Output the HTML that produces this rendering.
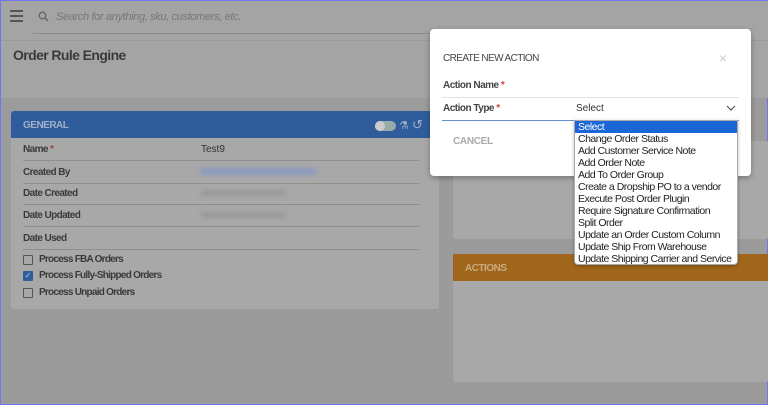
<!DOCTYPE html>
<html><head><style>
*{box-sizing:border-box;margin:0;padding:0}
body{width:768px;height:405px;overflow:hidden;font-family:"Liberation Sans",sans-serif;background:#9b9b9b;position:relative;border:1px solid #6e78f0}
.a{position:absolute}
.lbl{font-size:10px;color:#3a3a3a;font-weight:bold;letter-spacing:-0.6px}
.dv{height:1px;background:#8f8f8f}
.cb{width:10px;height:10px;border:1px solid #555;border-radius:1px}
.ck{font-size:10px;color:#3a3a3a;font-weight:bold;letter-spacing:-0.75px}
.dd div{font-size:10.5px;color:#222;height:12px;line-height:12px;padding-left:3px;white-space:nowrap;letter-spacing:-0.5px}
</style></head><body>
<div class="a" style="left:0;top:0;width:768px;height:97px;background:#a4a4a4"></div>
<div class="a" style="left:9px;top:9px;width:13px;height:2px;background:#555;box-shadow:0 5px 0 #555,0 10px 0 #555"></div>
<svg class="a" style="left:37px;top:10px" width="11" height="11" viewBox="0 0 11 11"><circle cx="4.5" cy="4.5" r="3.3" fill="none" stroke="#666" stroke-width="1.3"/><path d="M7 7l3 3" stroke="#666" stroke-width="1.4"/></svg>
<div class="a" style="left:55px;top:10px;font-size:11px;font-style:italic;color:#777;letter-spacing:-0.35px">Search for anything, sku, customers, etc.</div>
<div class="a" style="left:32px;top:32px;width:400px;height:1px;background:#8c8c8c"></div>
<div class="a" style="left:0;top:39px;width:768px;height:1px;background:#999"></div>
<div class="a" style="left:12px;top:46px;font-size:14px;font-weight:bold;color:#3a3a3a;letter-spacing:-0.6px">Order Rule Engine</div>

<div class="a" style="left:10px;top:110px;width:428px;height:198px;background:#a8a8a8;border-radius:3px"></div>
<div class="a" style="left:10px;top:110px;width:428px;height:27px;background:#2f5c9a;border-radius:3px 3px 0 0"></div>
<div class="a" style="left:22px;top:119px;font-size:10px;color:#9fb0c8;font-weight:bold;letter-spacing:-0.5px">GENERAL</div>
<div class="a" style="left:374px;top:120px;width:21px;height:10px;border-radius:5px;background:#9aa"></div>
<div class="a" style="left:374px;top:120px;width:10px;height:10px;border-radius:5px;background:#ccc"></div>
<div class="a" style="left:398px;top:118px;font-size:11px;color:#9fb0c8">⚗</div>
<div class="a" style="left:411px;top:116px;font-size:13px;color:#9fb0c8">↺</div>
<div class="a lbl" style="left:22px;top:143px">Name <span style="color:#a04040">*</span></div>
<div class="a" style="left:200px;top:143px;font-size:10px;color:#333">Test9</div>
<div class="a dv" style="left:22px;top:159px;width:396px"></div>
<div class="a lbl" style="left:22px;top:166px">Created By</div>
<div class="a" style="left:200px;top:167px;width:115px;height:7px;background:#8a9ac0;filter:blur(2px)"></div>
<div class="a dv" style="left:22px;top:182px;width:396px"></div>
<div class="a lbl" style="left:22px;top:187px">Date Created</div>
<div class="a" style="left:200px;top:189px;width:85px;height:6px;background:#999;filter:blur(2px)"></div>
<div class="a dv" style="left:22px;top:203px;width:396px"></div>
<div class="a lbl" style="left:22px;top:209px">Date Updated</div>
<div class="a" style="left:200px;top:211px;width:85px;height:6px;background:#999;filter:blur(2px)"></div>
<div class="a dv" style="left:22px;top:225px;width:396px"></div>
<div class="a lbl" style="left:22px;top:232px">Date Used</div>
<div class="a dv" style="left:22px;top:248px;width:396px"></div>
<div class="a cb" style="left:22px;top:254px"></div><div class="a ck" style="left:38px;top:253px">Process FBA Orders</div>
<div class="a cb" style="left:22px;top:270px;background:#2f5c9a;border-color:#2f5c9a;color:#ccd;font-size:8px;line-height:8px;text-align:center">✓</div><div class="a ck" style="left:38px;top:269px">Process Fully-Shipped Orders</div>
<div class="a cb" style="left:22px;top:287px"></div><div class="a ck" style="left:38px;top:286px">Process Unpaid Orders</div>

<div class="a" style="left:452px;top:140px;width:316px;height:98px;background:#a8a8a8;border-radius:3px"></div>
<div class="a" style="left:452px;top:253px;width:316px;height:128px;background:#a8a8a8;border-radius:3px"></div>
<div class="a" style="left:452px;top:253px;width:316px;height:27px;background:#a0661c"></div>
<div class="a" style="left:464px;top:262px;font-size:10px;color:#c9ab80;font-weight:bold;letter-spacing:-0.5px">ACTIONS</div>

<div class="a" style="left:429px;top:28px;width:321px;height:147px;background:#fff;border-radius:4px;box-shadow:0 2px 6px rgba(0,0,0,.3)"></div>
<div class="a" style="left:442px;top:52px;font-size:10px;color:#444;letter-spacing:-0.6px">CREATE NEW ACTION</div>
<div class="a" style="left:718px;top:49px;font-size:14px;color:#ccc">×</div>
<div class="a" style="left:442px;top:79px;font-size:10px;color:#444;font-weight:bold;letter-spacing:-0.5px">Action Name <span style="color:#c44">*</span></div>
<div class="a" style="left:441px;top:96px;width:297px;height:1px;background:#e2e2e2"></div>
<div class="a" style="left:442px;top:102px;font-size:10px;color:#444;font-weight:bold;letter-spacing:-0.5px">Action Type <span style="color:#c44">*</span></div>
<div class="a" style="left:575px;top:102px;font-size:10px;color:#333">Select</div>
<svg class="a" style="left:725px;top:104px" width="10" height="6" viewBox="0 0 10 6"><path d="M1 1l4 4 4-4" fill="none" stroke="#555" stroke-width="1.2"/></svg>
<div class="a" style="left:441px;top:119px;width:297px;height:1px;background:#6a8fd0"></div>
<div class="a" style="left:452px;top:135px;font-size:10px;color:#aaa;font-weight:bold;letter-spacing:-0.3px">CANCEL</div>

<div class="a dd" style="left:573px;top:119px;width:164px;height:145px;background:#fff;border:1px solid #aaa;border-radius:0 0 4px 4px;box-shadow:0 1px 3px rgba(0,0,0,.3)">
<div style="background:#1a66d6;color:#fff">Select</div>
<div>Change Order Status</div><div>Add Customer Service Note</div><div>Add Order Note</div><div>Add To Order Group</div><div>Create a Dropship PO to a vendor</div><div>Execute Post Order Plugin</div><div>Require Signature Confirmation</div><div>Split Order</div><div>Update an Order Custom Column</div><div>Update Ship From Warehouse</div><div>Update Shipping Carrier and Service</div>
</div>
</body></html>
